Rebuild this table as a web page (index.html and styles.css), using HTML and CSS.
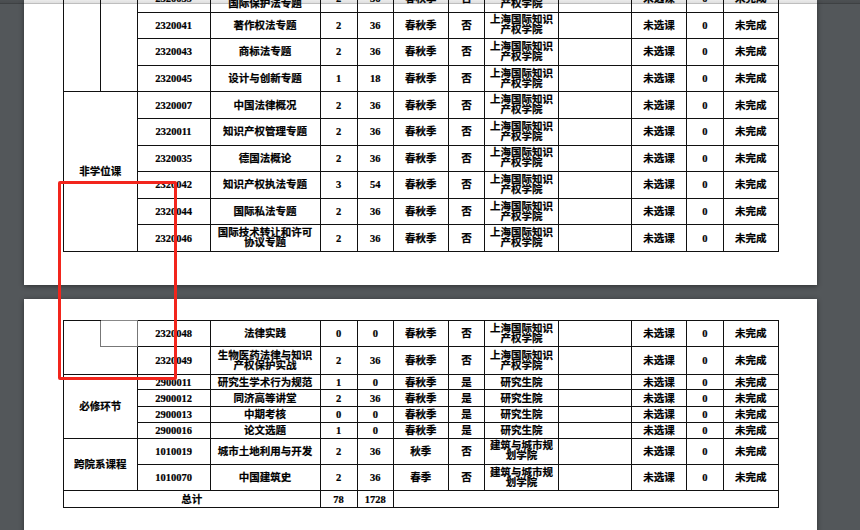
FILE: index.html
```html
<!DOCTYPE html>
<html lang="zh-CN">
<head>
<meta charset="utf-8">
<title>课程表</title>
<link rel="stylesheet" href="styles.css">
</head>
<body>
<div class="viewer">
  <div class="page page1">
    <table class="grid shift">
      <colgroup>
        <col class="w1"><col class="w2"><col class="w3"><col class="w4"><col class="w5"><col class="w6"><col class="w7"><col class="w8"><col class="w9"><col class="w10"><col class="w11"><col class="w12"><col class="w13">
      </colgroup>
      <tr class="r2">
        <td rowspan="4"></td><td rowspan="4"></td>
        <td>2320039</td><td class="two">知识产权诉讼法律<br>国际保护法专题</td><td>2</td><td>36</td><td>春秋季</td><td>否</td><td class="two">上海国际知识<br>产权学院</td><td></td><td>未选课</td><td>0</td><td>未完成</td>
      </tr>
      <tr class="r2">
        <td>2320041</td><td>著作权法专题</td><td>2</td><td>36</td><td>春秋季</td><td>否</td><td class="two">上海国际知识<br>产权学院</td><td></td><td>未选课</td><td>0</td><td>未完成</td>
      </tr>
      <tr class="r2">
        <td>2320043</td><td>商标法专题</td><td>2</td><td>36</td><td>春秋季</td><td>否</td><td class="two">上海国际知识<br>产权学院</td><td></td><td>未选课</td><td>0</td><td>未完成</td>
      </tr>
      <tr class="r2">
        <td>2320045</td><td>设计与创新专题</td><td>1</td><td>18</td><td>春秋季</td><td>否</td><td class="two">上海国际知识<br>产权学院</td><td></td><td>未选课</td><td>0</td><td>未完成</td>
      </tr>
      <tr class="r2">
        <td colspan="2" rowspan="6">非学位课</td>
        <td>2320007</td><td>中国法律概况</td><td>2</td><td>36</td><td>春秋季</td><td>否</td><td class="two">上海国际知识<br>产权学院</td><td></td><td>未选课</td><td>0</td><td>未完成</td>
      </tr>
      <tr class="r2">
        <td>2320011</td><td>知识产权管理专题</td><td>2</td><td>36</td><td>春秋季</td><td>否</td><td class="two">上海国际知识<br>产权学院</td><td></td><td>未选课</td><td>0</td><td>未完成</td>
      </tr>
      <tr class="r2">
        <td>2320035</td><td>德国法概论</td><td>2</td><td>36</td><td>春秋季</td><td>否</td><td class="two">上海国际知识<br>产权学院</td><td></td><td>未选课</td><td>0</td><td>未完成</td>
      </tr>
      <tr class="r2">
        <td>2320042</td><td>知识产权执法专题</td><td>3</td><td>54</td><td>春秋季</td><td>否</td><td class="two">上海国际知识<br>产权学院</td><td></td><td>未选课</td><td>0</td><td>未完成</td>
      </tr>
      <tr class="r2">
        <td>2320044</td><td>国际私法专题</td><td>2</td><td>36</td><td>春秋季</td><td>否</td><td class="two">上海国际知识<br>产权学院</td><td></td><td>未选课</td><td>0</td><td>未完成</td>
      </tr>
      <tr class="r2">
        <td>2320046</td><td class="two">国际技术转让和许可<br>协议专题</td><td>2</td><td>36</td><td>春秋季</td><td>否</td><td class="two">上海国际知识<br>产权学院</td><td></td><td>未选课</td><td>0</td><td>未完成</td>
      </tr>
    </table>
  </div>

  <div class="page page2">
    <table class="grid">
      <colgroup>
        <col class="w1"><col class="w2"><col class="w3"><col class="w4"><col class="w5"><col class="w6"><col class="w7"><col class="w8"><col class="w9"><col class="w10"><col class="w11"><col class="w12"><col class="w13">
      </colgroup>
      <tr class="r2a">
        <td rowspan="2" class="no-right"></td><td class="sub"></td>
        <td>2320048</td><td>法律实践</td><td>0</td><td>0</td><td>春秋季</td><td>否</td><td class="two">上海国际知识<br>产权学院</td><td></td><td>未选课</td><td>0</td><td>未完成</td>
      </tr>
      <tr class="r2b">
        <td class="no-left"></td>
        <td>2320049</td><td class="two">生物医药法律与知识<br>产权保护实战</td><td>2</td><td>36</td><td>春秋季</td><td>否</td><td class="two">上海国际知识<br>产权学院</td><td></td><td>未选课</td><td>0</td><td>未完成</td>
      </tr>
      <tr class="r1">
        <td colspan="2" rowspan="4">必修环节</td>
        <td>2900011</td><td>研究生学术行为规范</td><td>1</td><td>0</td><td>春秋季</td><td>是</td><td>研究生院</td><td></td><td>未选课</td><td>0</td><td>未完成</td>
      </tr>
      <tr class="r1b">
        <td>2900012</td><td>同济高等讲堂</td><td>2</td><td>36</td><td>春秋季</td><td>是</td><td>研究生院</td><td></td><td>未选课</td><td>0</td><td>未完成</td>
      </tr>
      <tr class="r1">
        <td>2900013</td><td>中期考核</td><td>0</td><td>0</td><td>春秋季</td><td>是</td><td>研究生院</td><td></td><td>未选课</td><td>0</td><td>未完成</td>
      </tr>
      <tr class="r1">
        <td>2900016</td><td>论文选题</td><td>1</td><td>0</td><td>春秋季</td><td>是</td><td>研究生院</td><td></td><td>未选课</td><td>0</td><td>未完成</td>
      </tr>
      <tr class="r2c">
        <td colspan="2" rowspan="2">跨院系课程</td>
        <td>1010019</td><td>城市土地利用与开发</td><td>2</td><td>36</td><td>秋季</td><td>否</td><td class="two">建筑与城市规<br>划学院</td><td></td><td>未选课</td><td>0</td><td>未完成</td>
      </tr>
      <tr class="r2c">
        <td>1010070</td><td>中国建筑史</td><td>2</td><td>36</td><td>春季</td><td>否</td><td class="two">建筑与城市规<br>划学院</td><td></td><td>未选课</td><td>0</td><td>未完成</td>
      </tr>
      <tr class="r1b">
        <td colspan="4">总计</td><td>78</td><td>1728</td><td colspan="7"></td>
      </tr>
    </table>
  </div>

  <div class="topshade"></div>
  <div class="mark"></div>
</div>
</body>
</html>
```

FILE: styles.css
```css
html, body {
  margin: 0;
  padding: 0;
  background: #53575a;
}

.viewer {
  position: relative;
  width: 860px;
  height: 530px;
  overflow: hidden;
  background: #53575a;
}

.page {
  width: 793px;
  margin-left: 24px;
  background: #fff;
  box-shadow: 0 1px 5px rgba(0, 0, 0, 0.45);
  overflow: hidden;
  box-sizing: border-box;
  padding-left: 39px;
}

.page1 {
  height: 285px;
}

.page2 {
  margin-top: 14px;
  height: 260px;
  padding-top: 21px;
}

.grid {
  border-collapse: collapse;
  table-layout: fixed;
  width: 715px;
}

.shift {
  margin-top: -15px;
}

.w1 { width: 37px; }
.w2 { width: 36.5px; }
.w3 { width: 73px; }
.w4 { width: 110px; }
.w5 { width: 37px; }
.w6 { width: 36.5px; }
.w7 { width: 54.7px; }
.w8 { width: 36.6px; }
.w9 { width: 73.4px; }
.w10 { width: 73.6px; }
.w11 { width: 54.7px; }
.w12 { width: 36.7px; }
.w13 { width: 55px; }

.grid td {
  border: 1px solid #111;
  padding: 0;
  text-align: center;
  vertical-align: middle;
  font-family: "Liberation Serif", "Noto Sans CJK SC", serif;
  font-weight: 700;
  font-size: 10.5px;
  line-height: 11px;
  color: #000;
  -webkit-text-stroke: 0.2px #000;
  white-space: nowrap;
  overflow: hidden;
}

.grid td.two {
  line-height: 10px;
}

.r2 { height: 26.6px; }
.r2a { height: 26.4px; }
.r2b { height: 27.3px; }
.r2c { height: 26.3px; }
.r1 { height: 15.8px; }
.r1b { height: 16.6px; }

.grid td.no-right {
  border-right: none;
}

.grid td.no-left {
  border-left: none;
  border-top: 1px solid #777;
}

.grid td.sub {
  border: 1px solid #777;
  border-top-color: #888;
}

.topshade {
  position: absolute;
  left: 0;
  top: 0;
  width: 860px;
  height: 4px;
  background: linear-gradient(to bottom, rgba(0, 0, 0, 0.08), rgba(0, 0, 0, 0.12) 70%, rgba(0, 0, 0, 0.35));
}

.mark {
  position: absolute;
  left: 58px;
  top: 181px;
  width: 113px;
  height: 193px;
  border: 3px solid #f2251c;
  border-radius: 2px;
}
```
